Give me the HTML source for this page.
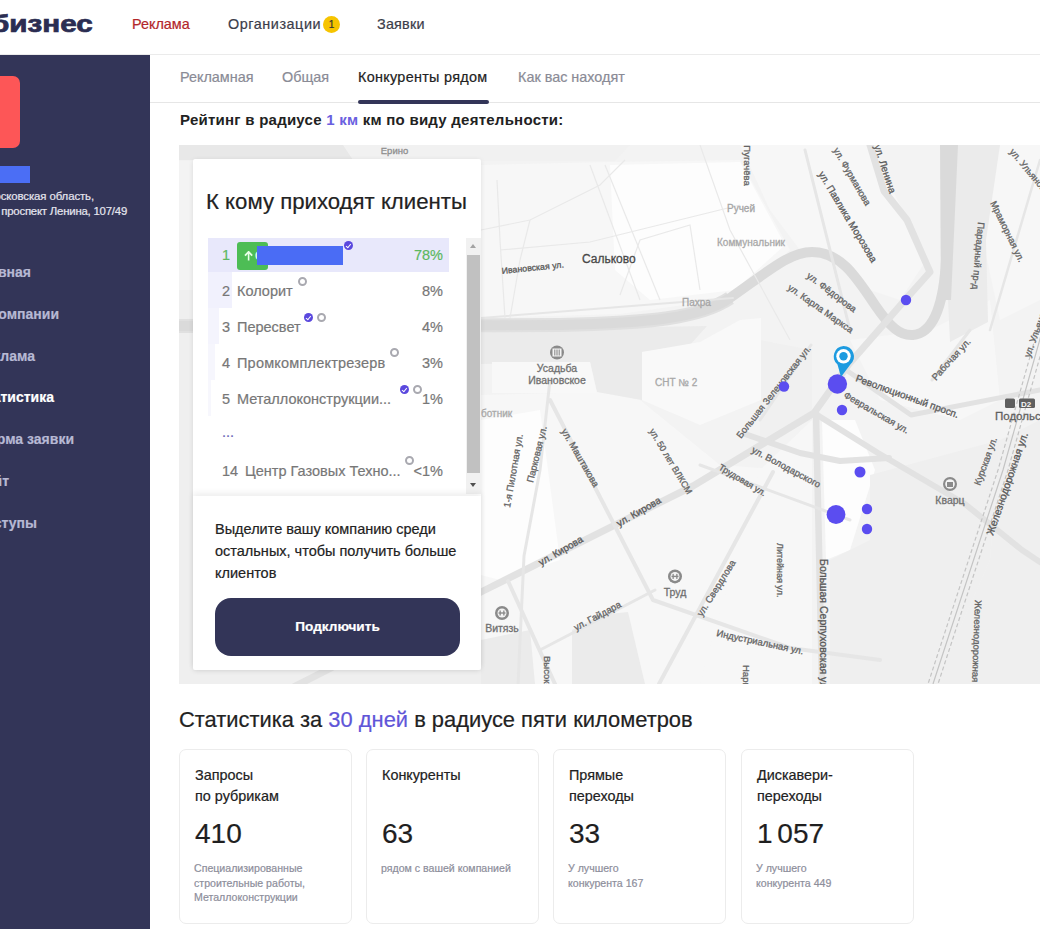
<!DOCTYPE html>
<html><head><meta charset="utf-8">
<style>
*{box-sizing:border-box;margin:0;padding:0}
html,body{width:1040px;height:929px;overflow:hidden;background:#fff;font-family:"Liberation Sans",sans-serif;color:#222}
.abs,.tab,.row,.stat,.mi{-webkit-text-stroke:0.2px currentColor}
.abs{position:absolute;white-space:nowrap}
#hdr{position:absolute;left:0;top:0;width:1040px;height:55px;border-bottom:1px solid #ebebeb;background:#fff}
#side{position:absolute;left:0;top:55px;width:150px;height:874px;background:#333558}
.mi{position:absolute;right:0;font-size:14px;color:#b7b9d4;text-align:right;white-space:nowrap;font-weight:bold}
#tabs{position:absolute;left:150px;top:55px;width:890px;height:48px;border-bottom:1px solid #e6e6e6}
.tab{position:absolute;top:14px;font-size:14.4px;color:#8a8b96;white-space:nowrap}
#map{position:absolute;left:179px;top:145px;width:861px;height:539px;background:#f2f2f2;overflow:hidden}
#card{position:absolute;left:193px;top:159px;width:288px;height:511px;background:#fff;border-radius:2px;box-shadow:0 1px 5px rgba(0,0,0,.10)}
.row{position:absolute;left:0;width:260px;height:36px;font-size:14.5px;color:#777}
.row .n{position:absolute;left:14px;top:9px}
.row .t{position:absolute;left:29px;top:9px;white-space:nowrap}
.row .p{position:absolute;right:25px;top:9px}
.ring{position:absolute;width:9px;height:9px;border:2px solid #a9a9b0;border-radius:50%}
.ver{position:absolute;width:9px;height:9px;background:#5a48de;border-radius:50%}
.ver:after{content:"";position:absolute;left:2.5px;top:1.6px;width:2px;height:3.6px;border:solid #fff;border-width:0 1.3px 1.3px 0;transform:rotate(40deg)}
.stat{position:absolute;top:749px;width:173px;height:175px;border:1px solid #ececec;border-radius:7px;background:#fff}
.stat .h{position:absolute;left:15px;top:15px;font-size:14.4px;line-height:21px;color:#222}
.stat .v{position:absolute;left:15px;top:68px;font-size:28px;color:#1f1f1f}
.stat .s{position:absolute;left:14px;top:111px;font-size:10.6px;line-height:14.5px;color:#8d8e9b}
</style></head><body>
<div id="hdr">
  <div class="abs" style="left:-9px;top:11px;font-size:23px;font-weight:bold;color:#2b2d52;transform:scaleX(1.29);transform-origin:0 0;-webkit-text-stroke:0.7px #2b2d52">бизнес</div>
  <div class="abs" style="left:132px;top:16px;font-size:14.4px;color:#b3262a">Реклама</div>
  <div class="abs" style="left:228px;top:16px;font-size:14.4px;color:#3c3d4a;letter-spacing:0.55px">Организации</div>
  <div class="abs" style="left:323px;top:16px;width:17px;height:17px;border-radius:50%;background:#f6c400;font-size:10px;color:#333;text-align:center;line-height:17px">1</div>
  <div class="abs" style="left:377px;top:16px;font-size:14.4px;color:#3c3d4a;letter-spacing:0.2px">Заявки</div>
</div>
<div id="side">
  <div class="abs" style="left:0;top:21px;width:20px;height:72px;background:#fd5657;border-radius:0 7px 7px 0"></div>
  <div class="abs" style="left:0;top:111px;width:30px;height:17px;background:#4b6ef5"></div>
  <div class="abs" style="right:56px;top:135px;font-size:11.4px;color:#e6e6ef;letter-spacing:-0.1px;text-align:right">Московская область,</div>
  <div class="abs" style="right:23px;top:150px;font-size:11.4px;color:#e6e6ef;letter-spacing:-0.22px;text-align:right">Подольск, проспект Ленина, 107/49</div>
  <div class="mi" style="top:209px;right:119px">Главная</div>
  <div class="mi" style="top:251px;right:91px">О компании</div>
  <div class="mi" style="top:293px;right:115px">Реклама</div>
  <div class="mi" style="top:334px;right:96px;color:#fff">Статистика</div>
  <div class="mi" style="top:376px;right:76px">Форма заявки</div>
  <div class="mi" style="top:418px;right:141px">Сайт</div>
  <div class="mi" style="top:460px;right:113px">Доступы</div>
</div>
<div id="tabs">
  <div class="tab" style="left:30px">Рекламная</div>
  <div class="tab" style="left:132px">Общая</div>
  <div class="tab" style="left:208px;color:#222;letter-spacing:0.3px">Конкуренты рядом</div>
  <div class="abs" style="left:208px;top:45px;width:131px;height:3.5px;background:#333558;border-radius:2px"></div>
  <div class="tab" style="left:368px;letter-spacing:0px">Как вас находят</div>
</div>
<div class="abs" style="left:180px;top:111px;font-size:15px;font-weight:bold;color:#222;letter-spacing:0.25px;-webkit-text-stroke:0">Рейтинг в радиусе <span style="color:#6a60e0">1 км</span> км по виду деятельности:</div>

<div id="map"><svg width="861" height="539" viewBox="179 145 861 539" style="position:absolute;left:0;top:0">
<rect x="179" y="145" width="861" height="539" fill="#f3f3f3"/>
<g fill="#f7f7f7">
<polygon points="481,165 610,162 740,160 790,250 733,298 620,314 481,318"/>
<polygon points="740,145 870,145 905,215 925,262 900,300 870,290 840,258 800,250 770,210"/>
<polygon points="481,395 600,392 640,400 720,465 790,470 770,540 700,684 481,684"/>
<polygon points="990,145 1040,145 1040,300 1000,320 985,250"/>
<polygon points="850,340 930,330 990,300 1000,400 960,420 880,400"/>
<polygon points="760,470 812,420 812,684 700,684"/>
</g>
<g fill="#fdfdfd">
<polygon points="610,165 740,162 785,245 735,290 650,300 615,270"/>
<polygon points="822,420 855,420 875,470 850,550 826,560"/>
<polygon points="481,420 540,410 560,560 500,580 481,575"/>
</g>
<polygon points="179,145 630,145 615,161 179,161" fill="#f1f1f1"/><polygon points="179,145 343,145 353,160 179,160" fill="#e8e8e8"/>
<g fill="#ebebeb">
<polygon points="481,330 707,326 690,345 642,352 642,400 597,392 590,362 481,364"/><polygon points="492,362 590,362 597,393 492,393" fill="#f8f8f8"/>
<polygon points="870,475 1000,440 990,560 935,684 830,684 830,560 870,540" fill="#efefef"/>
<polygon points="955,145 1000,145 986,240 988,322 950,342 948,300"/>
<polygon points="572,630 600,615 628,612 645,684 572,684"/>
<polygon points="481,640 530,630 535,684 481,684"/>

</g>
<g fill="#efefef">
<polygon points="1000,440 1040,420 1040,684 935,684 990,560"/>
<polygon points="179,290 193,290 193,684 179,684"/>
<polygon points="760,340 812,350 812,420 760,440" fill="#f0f0f0"/>
<polygon points="642,352 700,342 740,320 761,318 761,400 700,425 642,400" fill="#f9f9f9"/>
<polygon points="179,670 481,670 481,684 179,684"/>
</g>
<path d="M179,326 L560,325 C650,323 700,318 730,298" fill="none" stroke="#e0e0e0" stroke-width="14"/>
<path d="M179,326 L560,325 C650,323 700,318 730,298 C770,270 790,252 812,252 C840,252 855,275 875,305 C890,327 900,336 913,335 C935,333 944,300 946,260 L948,145" fill="none" stroke="#dadada" stroke-width="10"/>
<polygon points="941,300 951,300 958,145 940,145" fill="#dadada"/>
<g fill="none" stroke="#e2e2e2" stroke-linecap="round" stroke-linejoin="round">
<path d="M179,745 L481,592 L693,486 L814,413 L849,364 L905,300 L930,272 L907,220 L884,191 L870,145" stroke-width="7"/>
<path d="M816,413 L822,684" stroke-width="6.5"/>
<path d="M814,413 L878,453 L965,504 L1022,550 L1040,562" stroke-width="6"/>
<path d="M745,434 L800,453 L840,461 L889,458" stroke-width="6"/>
<path d="M849,372 L911,415 L1040,390" stroke-width="5"/>
</g>
<g fill="none" stroke="#e6e6e6" stroke-linecap="round" stroke-linejoin="round">
<path d="M773,472 L659,684" stroke-width="4"/>
<path d="M550,400 L653,600 L790,648 L880,660" stroke-width="4"/>
<path d="M540,650 L655,590" stroke-width="3"/>
<path d="M550,380 L540,470 L524,556 L518,684" stroke-width="3"/>
<path d="M508,581 L555,684" stroke-width="4"/>
<path d="M700,465 L850,520" stroke-width="3"/>
<path d="M760,420 L811,345" stroke-width="3"/>
<path d="M805,150 L850,330" stroke-width="3"/>
<path d="M932,380 L970,330" stroke-width="3"/>
<path d="M1040,160 L990,330" stroke-width="2.5"/>
<path d="M481,318 L733,298" stroke-width="2"/>
</g>
<g fill="none" stroke="#e9e9e9" stroke-width="1.2">
<path d="M497,180 L500,240 L505,318"/>
<path d="M481,230 L530,220 L600,185 L625,160"/>
<path d="M530,220 L520,260 L510,318"/>
<path d="M500,250 L590,242 L740,205"/>
<path d="M590,165 L640,300"/>
<path d="M605,165 L660,300"/>
<path d="M700,145 L730,230 L790,340"/>
<path d="M620,295 L640,240 L690,225 L700,290"/>
</g>
<g fill="none" stroke="#c4c4c4" stroke-width="1.2">
<path d="M1046,300 L998,470 L928,684" stroke-dasharray="4 2.5"/>
<path d="M1051,300 L1003,470 L933,684"/>
<path d="M1056,300 L1008,470 L938,684" stroke-dasharray="4 2.5"/>
</g>
<g font-family="Liberation Sans, sans-serif" stroke-width="0.3" style="paint-order:stroke">
<text x="394.5" y="154" font-size="9.5" fill="#8f8f8f" stroke="#8f8f8f" text-anchor="middle">Ерино</text>
<text x="582" y="263" font-size="12" fill="#484848" stroke="#484848" text-anchor="start">Сальково</text>
<text x="502" y="274" font-size="8.8" fill="#585858" stroke="#585858" text-anchor="start" transform="rotate(-6 502 274)">Ивановская ул.</text>
<text x="741" y="212" font-size="10" fill="#a5a5a5" stroke="#a5a5a5" text-anchor="middle">Ручей</text>
<text x="717" y="246" font-size="10" fill="#a8a8a8" stroke="#a8a8a8" text-anchor="start">Коммунальник</text>
<text x="682" y="306" font-size="10" fill="#a5a5a5" stroke="#a5a5a5" text-anchor="start">Пахра</text>
<text x="557" y="372" font-size="10.5" fill="#707070" stroke="#707070" text-anchor="middle">Усадьба</text>
<text x="557" y="384" font-size="10.5" fill="#707070" stroke="#707070" text-anchor="middle">Ивановское</text>
<text x="655" y="386" font-size="10" fill="#a8a8a8" stroke="#a8a8a8" text-anchor="start">СНТ № 2</text>
<text x="481" y="417" font-size="10" fill="#aaaaaa" stroke="#aaaaaa" text-anchor="start">ботник</text>
<text x="744" y="130" font-size="9.5" fill="#646464" stroke="#646464" text-anchor="start" transform="rotate(90 744 130)">ул. Пугачёва</text>
<text x="833" y="150" font-size="9.5" fill="#646464" stroke="#646464" text-anchor="start" transform="rotate(60 833 150)">ул. Фурманова</text>
<text x="874" y="146" font-size="10" fill="#5a5a5a" stroke="#5a5a5a" text-anchor="start" transform="rotate(72 874 146)">ул. Ленина</text>
<text x="818" y="174" font-size="10" fill="#5a5a5a" stroke="#5a5a5a" text-anchor="start" transform="rotate(59 818 174)">ул. Павлика Морозова</text>
<text x="806" y="277" font-size="9.5" fill="#646464" stroke="#646464" text-anchor="start" transform="rotate(37 806 277)">ул. Фёдорова</text>
<text x="787" y="289" font-size="9.5" fill="#646464" stroke="#646464" text-anchor="start" transform="rotate(35 787 289)">ул. Карла Маркса</text>
<text x="978" y="222" font-size="9.5" fill="#646464" stroke="#646464" text-anchor="start" transform="rotate(95 978 222)">Парадный пр-д</text>
<text x="990" y="203" font-size="9.5" fill="#646464" stroke="#646464" text-anchor="start" transform="rotate(64 990 203)">Мраморная ул.</text>
<text x="1009" y="152" font-size="9.5" fill="#646464" stroke="#646464" text-anchor="start" transform="rotate(50 1009 152)">ул. Ульяновых</text>
<text x="1030" y="358" font-size="9.5" fill="#646464" stroke="#646464" text-anchor="start" transform="rotate(-70 1030 358)">ул. Ульяновых</text>
<text x="936" y="381" font-size="9.5" fill="#646464" stroke="#646464" text-anchor="start" transform="rotate(-48 936 381)">Рабочая ул.</text>
<text x="855" y="381" font-size="10" fill="#5a5a5a" stroke="#5a5a5a" text-anchor="start" transform="rotate(20 855 381)">Революционный просп.</text>
<text x="843" y="397" font-size="9.5" fill="#646464" stroke="#646464" text-anchor="start" transform="rotate(30 843 397)">Февральская ул.</text>
<text x="741" y="439" font-size="9.5" fill="#646464" stroke="#646464" text-anchor="start" transform="rotate(-52 741 439)">Большая Зеленовская ул.</text>
<text x="561" y="431" font-size="9.5" fill="#646464" stroke="#646464" text-anchor="start" transform="rotate(60 561 431)">ул. Маштакова</text>
<text x="533" y="483" font-size="9.5" fill="#646464" stroke="#646464" text-anchor="start" transform="rotate(-76 533 483)">Парковая ул.</text>
<text x="510" y="508" font-size="9.5" fill="#646464" stroke="#646464" text-anchor="start" transform="rotate(-80 510 508)">1-я Пилотная ул.</text>
<text x="649" y="431" font-size="9" fill="#646464" stroke="#646464" text-anchor="start" transform="rotate(59 649 431)">ул. 50 лет ВЛКСМ</text>
<text x="751" y="452" font-size="9.5" fill="#646464" stroke="#646464" text-anchor="start" transform="rotate(28 751 452)">ул. Володарского</text>
<text x="718" y="469" font-size="9" fill="#646464" stroke="#646464" text-anchor="start" transform="rotate(31 718 469)">Трудовая ул.</text>
<text x="541" y="566" font-size="10" fill="#585858" stroke="#585858" text-anchor="start" transform="rotate(-30 541 566)">ул. Кирова</text>
<text x="619" y="527" font-size="10" fill="#585858" stroke="#585858" text-anchor="start" transform="rotate(-30 619 527)">ул. Кирова</text>
<text x="675" y="596" font-size="10.5" fill="#707070" stroke="#707070" text-anchor="middle">Труд</text>
<text x="502" y="632" font-size="10.5" fill="#707070" stroke="#707070" text-anchor="middle">Витязь</text>
<text x="576" y="631" font-size="9.5" fill="#646464" stroke="#646464" text-anchor="start" transform="rotate(-28 576 631)">ул. Гайдара</text>
<text x="702" y="617" font-size="9.5" fill="#646464" stroke="#646464" text-anchor="start" transform="rotate(-58 702 617)">ул. Свердлова</text>
<text x="716" y="636" font-size="9.5" fill="#646464" stroke="#646464" text-anchor="start" transform="rotate(12 716 636)">Индустриальная ул.</text>
<text x="544" y="656" font-size="9.5" fill="#646464" stroke="#646464" text-anchor="start" transform="rotate(90 544 656)">Высоковольтная</text>
<text x="743" y="665" font-size="9.5" fill="#646464" stroke="#646464" text-anchor="start" transform="rotate(90 743 665)">Нариманова</text>
<text x="777" y="543" font-size="9" fill="#646464" stroke="#646464" text-anchor="start" transform="rotate(90 777 543)">Литейная ул.</text>
<text x="820" y="559" font-size="10.5" fill="#585858" stroke="#585858" text-anchor="start" transform="rotate(90 820 559)">Большая Серпуховская ул.</text>
<text x="950" y="504" font-size="10.5" fill="#707070" stroke="#707070" text-anchor="middle">Кварц</text>
<text x="980" y="486" font-size="9.5" fill="#646464" stroke="#646464" text-anchor="start" transform="rotate(-70 980 486)">Курская ул.</text>
<text x="993" y="536" font-size="10.5" fill="#585858" stroke="#585858" text-anchor="start" transform="rotate(-71 993 536)">Железнодорожная ул.</text>
<text x="975" y="600" font-size="9.5" fill="#646464" stroke="#646464" text-anchor="start" transform="rotate(92 975 600)">Железнодорожная</text>
<text x="995" y="420" font-size="11.5" fill="#5f5f5f" stroke="#5f5f5f" text-anchor="start">Подольск</text>
</g>
<circle cx="557" cy="352.5" r="7" fill="#8a8a8a"/><rect x="552.5" y="348.5" width="9" height="8" fill="#f4f4f4"/><path d="M554.8,349.5v6M557,349.5v6M559.2,349.5v6" stroke="#8a8a8a" stroke-width="1.1"/>
<circle cx="675" cy="576.4" r="7" fill="#8a8a8a"/><circle cx="675" cy="576.4" r="4.5" fill="#f4f4f4"/><rect x="671.5" y="575.6999999999999" width="7" height="1.4" fill="#8a8a8a"/><rect x="672.5" y="573.9" width="1.3" height="5" fill="#8a8a8a"/><rect x="676.2" y="573.9" width="1.3" height="5" fill="#8a8a8a"/>
<circle cx="502" cy="613" r="7" fill="#8a8a8a"/><circle cx="502" cy="613" r="4.5" fill="#f4f4f4"/><rect x="498.5" y="612.3" width="7" height="1.4" fill="#8a8a8a"/><rect x="499.5" y="610.5" width="1.3" height="5" fill="#8a8a8a"/><rect x="503.2" y="610.5" width="1.3" height="5" fill="#8a8a8a"/>
<circle cx="950" cy="484" r="7" fill="#8a8a8a"/><circle cx="950" cy="484" r="4.8" fill="#f4f4f4"/><rect x="947" y="482" width="6" height="5" fill="#8a8a8a"/>
<rect x="1005" y="398.5" width="10" height="9.5" rx="1.5" fill="#5f5f5f"/><rect x="1019" y="398.5" width="16" height="9.5" rx="1.5" fill="#5f5f5f"/><text x="1021" y="406.5" font-size="8" fill="#f5f5f5" font-family="Liberation Sans" font-weight="bold">D2</text>
<circle cx="906" cy="300" r="5.2" fill="#5b4df0"/>
<circle cx="784" cy="386.5" r="5.2" fill="#5b4df0"/>
<circle cx="842" cy="410" r="5.2" fill="#5b4df0"/>
<circle cx="860" cy="472" r="5.5" fill="#5b4df0"/>
<circle cx="867" cy="509" r="5.2" fill="#5b4df0"/>
<circle cx="867" cy="529" r="5.2" fill="#5b4df0"/>
<circle cx="837.4" cy="384" r="9.7" fill="#5b4df0"/>
<circle cx="836" cy="514.5" r="9.4" fill="#5b4df0"/>
<path d="M843.5,346 a10.5,10.5 0 0 1 6.8,18.4 L841,377 L837.5,364.5 a10.5,10.5 0 0 1 6,-18.5 z" fill="#1d9be0"/>
<circle cx="843.5" cy="356.3" r="7.2" fill="#fff"/><circle cx="843.5" cy="356.3" r="4.2" fill="#1d9be0"/>
</svg></div>

<div id="card">
  <div class="abs" style="left:13px;top:30px;font-size:22.2px;color:#222">К кому приходят клиенты</div>
  <div id="list" style="position:absolute;left:15px;top:79px;width:273px;height:256px;overflow:hidden">
    <div class="abs" style="left:0;top:0;width:241px;height:34px;background:#e8e8fb"></div>
    <div class="abs" style="left:0;top:34px;width:24px;height:36px;background:#f1f1fd"></div>
    <div class="abs" style="left:0;top:70px;width:11px;height:36px;background:#f4f4fd"></div>
    <div class="abs" style="left:0;top:106px;width:7px;height:36px;background:#f6f6fd"></div>
    <div class="abs" style="left:0;top:142px;width:3px;height:36px;background:#f7f7fd"></div>
    <div class="row" style="top:0;color:#5cb860"><span class="n">1</span><span class="p">78%</span></div>
    <div class="abs" style="left:29px;top:4px;width:31px;height:28px;background:#4dbd55;border-radius:3px;color:#f0fff0;font-size:13px;line-height:28px;padding-left:18px">О</div><svg class="abs" style="left:36px;top:13px" width="10" height="11" viewBox="0 0 10 11"><path d="M1,4.6 L4.6,0.8 L8.2,4.6" fill="none" stroke="#e8ffe8" stroke-width="1.8" stroke-linejoin="round"/><path d="M4.6,1.5 V9.5" stroke="#e8ffe8" stroke-width="1.6"/></svg>
    <div class="abs" style="left:49px;top:8px;width:86px;height:19px;background:#4a6cf5"></div>
    <div class="ver" style="left:136px;top:3px"></div>
    <div class="row" style="top:36px"><span class="n">2</span><span class="t">Колорит</span><span class="p">8%</span></div>
    <div class="ring" style="left:90px;top:39px"></div>
    <div class="row" style="top:72px"><span class="n">3</span><span class="t">Пересвет</span><span class="p">4%</span></div>
    <div class="ver" style="left:96px;top:75px"></div>
    <div class="ring" style="left:109px;top:75px"></div>
    <div class="row" style="top:108px"><span class="n">4</span><span class="t" style="letter-spacing:0.2px">Промкомплектрезерв</span><span class="p">3%</span></div>
    <div class="ring" style="left:182px;top:110px"></div>
    <div class="row" style="top:144px"><span class="n">5</span><span class="t">Металлоконструкции...</span><span class="p">1%</span></div>
    <div class="ver" style="left:192px;top:147px"></div>
    <div class="ring" style="left:205px;top:147px"></div>
    <div class="row" style="top:180px;color:#6c66b8"><span class="n" style="top:6px">...</span></div>
    <div class="row" style="top:216px"><span class="n">14</span><span class="t" style="left:37px">Центр Газовых Техно...</span><span class="p">&lt;1%</span></div>
    <div class="ring" style="left:197px;top:218px"></div>
    <div class="abs" style="left:258px;top:0;width:15px;height:256px;background:#f1f1f1"></div>
    <div class="abs" style="left:259px;top:17px;width:13px;height:218px;background:#c1c1c1"></div>
    <div class="abs" style="left:262px;top:6px;width:0;height:0;border-left:3.5px solid transparent;border-right:3.5px solid transparent;border-bottom:4px solid #a3a3a3"></div>
    <div class="abs" style="left:262px;top:245px;width:0;height:0;border-left:3.5px solid transparent;border-right:3.5px solid transparent;border-top:4px solid #505050"></div>
  </div>
  <div class="abs" style="left:0;top:337px;width:288px;height:174px;background:#fff;border-radius:0 0 4px 4px;box-shadow:0 -3px 6px rgba(0,0,0,.07)"></div>
  <div class="abs" style="left:22px;top:359px;font-size:14.5px;line-height:22px;color:#222;white-space:normal;width:250px">Выделите вашу компанию среди<br>остальных, чтобы получить больше<br>клиентов</div>
  <div class="abs" style="left:22px;top:439px;width:245px;height:58px;background:#333558;border-radius:16px;color:#fff;font-size:13.6px;font-weight:bold;text-align:center;line-height:58px">Подключить</div>
</div>

<div class="abs" style="left:179px;top:707px;font-size:21.9px;color:#222">Статистика за <span style="color:#5f55d8">30 дней</span> в радиусе пяти километров</div>
<div class="stat" style="left:179px"><div class="h">Запросы<br>по рубрикам</div><div class="v">410</div><div class="s">Специализированные<br>строительные работы,<br>Металлоконструкции</div></div>
<div class="stat" style="left:366px"><div class="h">Конкуренты</div><div class="v">63</div><div class="s">рядом с вашей компанией</div></div>
<div class="stat" style="left:553px"><div class="h">Прямые<br>переходы</div><div class="v">33</div><div class="s">У лучшего<br>конкурента 167</div></div>
<div class="stat" style="left:741px"><div class="h">Дискавери-<br>переходы</div><div class="v">1<span style="margin-left:-3px"> </span>057</div><div class="s">У лучшего<br>конкурента 449</div></div>
</body></html>
